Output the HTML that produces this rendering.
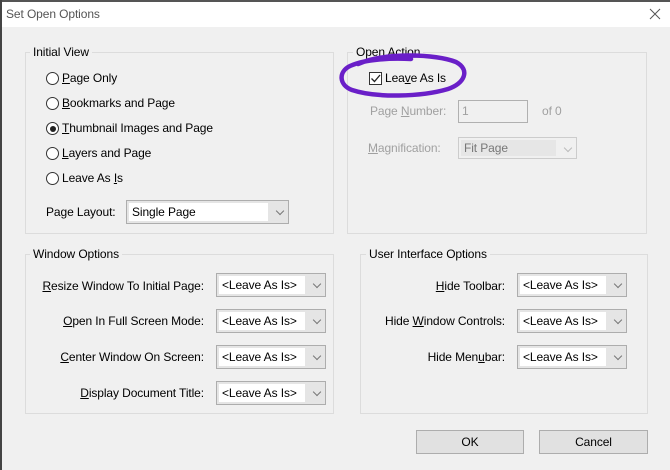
<!DOCTYPE html>
<html><head><style>
*{margin:0;padding:0;box-sizing:border-box}
body{width:670px;height:470px;overflow:hidden;background:#f0f0f0;font-family:"Liberation Sans",sans-serif;font-size:12px;color:#000;position:relative;letter-spacing:-0.1px}
.a{position:absolute;white-space:nowrap}
.grp{position:absolute;border:1px solid #dcdcdc}
.gl{position:absolute;background:#f0f0f0;padding:0 3px;line-height:14px}
.rad{position:absolute;width:13px;height:13px;border:1px solid #333;border-radius:50%;background:#fff}
.dd{position:absolute;border:1px solid #adadad;background:#e5e5e5;height:24px}
.dd .t{position:absolute;left:2px;top:2px;bottom:2px;right:20px;background:#fff;padding-left:3px;line-height:18px}
.dd .c{position:absolute;right:5px;top:7px;width:6px;height:6px;border-right:1px solid #777;border-bottom:1px solid #777;transform:rotate(45deg)}
.btn{position:absolute;border:1px solid #adadad;background:#e1e1e1;text-align:center;line-height:22px}
u{text-decoration:underline}
.lbl{position:absolute;text-align:right;width:200px;line-height:14px}
</style></head><body>
<div class="a" style="left:0;top:0;width:670px;height:2px;background:#555"></div>
<div class="a" style="left:0;top:0;width:2px;height:470px;background:#444"></div>
<div class="a" style="left:2px;top:2px;width:668px;height:25px;background:#fff"></div>
<div class="a" style="left:6px;top:7px;color:#555;line-height:14px">Set Open Options</div>
<svg class="a" style="left:649px;top:8px" width="12" height="12"><path d="M1 1L11 11M11 1L1 11" stroke="#555" stroke-width="1"/></svg>

<div class="grp" style="left:25px;top:52px;width:309px;height:182px"></div>
<div class="gl" style="left:30px;top:45px">Initial View</div>
<div class="rad" style="left:46px;top:72px"></div><div class="a" style="left:62px;top:71px"><u>P</u>age Only</div>
<div class="rad" style="left:46px;top:97px"></div><div class="a" style="left:62px;top:96px"><u>B</u>ookmarks and Page</div>
<div class="rad" style="left:46px;top:122px"><div style="position:absolute;left:2.5px;top:2.5px;width:6px;height:6px;border-radius:50%;background:#222"></div></div><div class="a" style="left:62px;top:121px"><u>T</u>humbnail Images and Page</div>
<div class="rad" style="left:46px;top:147px"></div><div class="a" style="left:62px;top:146px"><u>L</u>ayers and Page</div>
<div class="rad" style="left:46px;top:172px"></div><div class="a" style="left:62px;top:171px">Leave As <u>I</u>s</div>
<div class="a" style="left:46px;top:205px">Pa<u>g</u>e Layout:</div>
<div class="dd" style="left:126px;top:200px;width:163px"><div class="t">Single Page</div><div class="c"></div></div>

<div class="grp" style="left:347px;top:52px;width:300px;height:182px"></div>
<div class="gl" style="left:353px;top:45px;color:#000">Open Action</div>
<div class="a" style="left:369px;top:72px;width:13px;height:13px;border:1px solid #333;background:#fff"><svg width="11" height="11" style="position:absolute;left:0;top:0"><path d="M1.5 5.5L4.5 8.5L10 2" stroke="#222" fill="none" stroke-width="1.3"/></svg></div>
<div class="a" style="left:385px;top:71px">Lea<u>v</u>e As Is</div>
<div class="a" style="left:370px;top:104px;color:#a0a0a0">Page <u>N</u>umber:</div>
<div class="a" style="left:458px;top:100px;width:70px;height:23px;border:1px solid #b0b0b0;background:#f0f0f0;color:#a0a0a0;padding-left:3px;line-height:20px">1</div>
<div class="a" style="left:542px;top:104px;color:#a0a0a0">of 0</div>
<div class="a" style="left:368px;top:141px;color:#a0a0a0"><u>M</u>agnification:</div>
<div class="dd" style="left:458px;top:137px;width:119px;height:22px;background:#f0f0f0;border-color:#ccc"><div class="t" style="background:#e6e6e6;color:#777;line-height:16px">Fit Page</div><div class="c" style="border-color:#bbb"></div></div>
<svg class="a" style="left:336px;top:50px" width="135" height="52"><path d="M22 14C50 2 100 4 120 12C135 20 128 34 112 39C85 47 40 48 16 40C3 35 2 22 14 16C30 9 55 8 75 9" stroke="#6a1fc8" stroke-width="4.5" fill="none" stroke-linecap="round"/></svg>

<div class="grp" style="left:25px;top:254px;width:309px;height:160px"></div>
<div class="gl" style="left:30px;top:247px">Window Options</div>
<div class="lbl" style="left:4px;top:279px"><u>R</u>esize Window To Initial Page:</div>
<div class="dd" style="left:216px;top:273px;width:110px"><div class="t">&lt;Leave As Is&gt;</div><div class="c"></div></div>
<div class="lbl" style="left:4px;top:314px"><u>O</u>pen In Full Screen Mode:</div>
<div class="dd" style="left:216px;top:309px;width:110px"><div class="t">&lt;Leave As Is&gt;</div><div class="c"></div></div>
<div class="lbl" style="left:4px;top:350px"><u>C</u>enter Window On Screen:</div>
<div class="dd" style="left:216px;top:345px;width:110px"><div class="t">&lt;Leave As Is&gt;</div><div class="c"></div></div>
<div class="lbl" style="left:4px;top:386px"><u>D</u>isplay Document Title:</div>
<div class="dd" style="left:216px;top:381px;width:110px"><div class="t">&lt;Leave As Is&gt;</div><div class="c"></div></div>

<div class="grp" style="left:360px;top:254px;width:288px;height:160px"></div>
<div class="gl" style="left:366px;top:247px">User Interface Options</div>
<div class="lbl" style="left:305px;top:279px"><u>H</u>ide Toolbar:</div>
<div class="dd" style="left:517px;top:273px;width:110px"><div class="t">&lt;Leave As Is&gt;</div><div class="c"></div></div>
<div class="lbl" style="left:305px;top:314px">Hide <u>W</u>indow Controls:</div>
<div class="dd" style="left:517px;top:309px;width:110px"><div class="t">&lt;Leave As Is&gt;</div><div class="c"></div></div>
<div class="lbl" style="left:305px;top:350px">Hide Men<u>u</u>bar:</div>
<div class="dd" style="left:517px;top:345px;width:110px"><div class="t">&lt;Leave As Is&gt;</div><div class="c"></div></div>

<div class="btn" style="left:416px;top:430px;width:108px;height:24px">OK</div>
<div class="btn" style="left:539px;top:430px;width:109px;height:24px">Cancel</div>
</body></html>
